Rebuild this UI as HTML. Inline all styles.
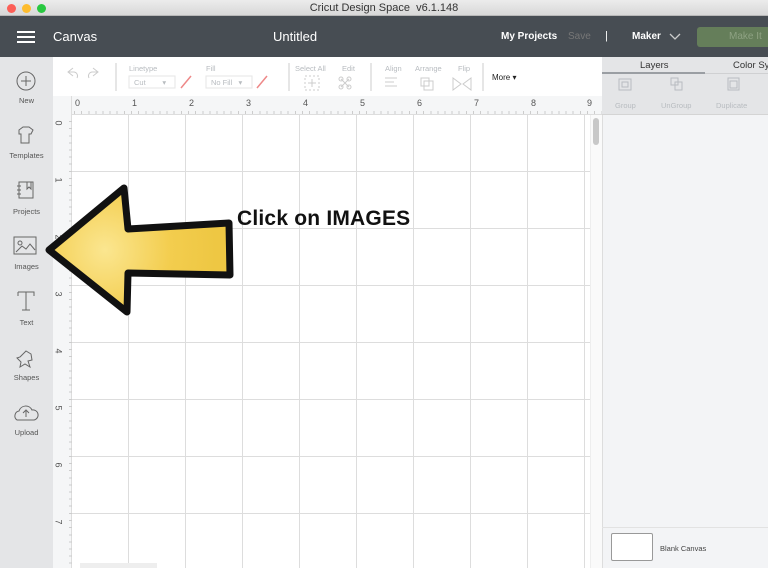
<!DOCTYPE html>
<html><head><meta charset="utf-8"><style>
*{margin:0;padding:0;box-sizing:border-box}
body{width:768px;height:568px;overflow:hidden;font-family:"Liberation Sans",sans-serif;background:#fff;position:relative}
.a{position:absolute;white-space:nowrap}
.t{font-size:7.5px;color:#b8bcc0}
.sl{font-size:7.5px;color:#555;width:53px;text-align:center;left:0}
</style></head><body>
<div class="a" style="left:0;top:0;width:768px;height:16px;background:linear-gradient(#ececec,#d8d8d8);border-bottom:1px solid #b8b8b8"></div>
<div class="a" style="left:7px;top:4px;width:9px;height:9px;border-radius:50%;background:#fc5f57"></div>
<div class="a" style="left:22px;top:4px;width:9px;height:9px;border-radius:50%;background:#fdbc2e"></div>
<div class="a" style="left:37px;top:4px;width:9px;height:9px;border-radius:50%;background:#28c840"></div>
<div class="a" style="left:0;top:2px;width:768px;text-align:center;font-size:11px;color:#333">Cricut Design Space&nbsp; v6.1.148</div>
<div class="a" style="left:0;top:16px;width:768px;height:41px;background:#474d53"></div>
<div class="a" style="left:17px;top:31px;width:18px;height:2px;background:#fff;box-shadow:0 5px 0 #fff,0 10px 0 #fff"></div>
<div class="a" style="left:53px;top:29px;font-size:13px;color:#fff">Canvas</div>
<div class="a" style="left:273px;top:29px;font-size:13px;color:#fff">Untitled</div>
<div class="a" style="left:501px;top:31px;font-size:10px;color:#fff;font-weight:bold">My Projects</div>
<div class="a" style="left:568px;top:31px;font-size:10px;color:#777">Save</div>
<div class="a" style="left:605px;top:30px;font-size:11px;color:#fff">|</div>
<div class="a" style="left:632px;top:31px;font-size:10px;color:#fff;font-weight:bold">Maker</div>
<svg class="a" style="left:669px;top:33px" width="12" height="8"><path d="M1 1l5 5 5-5" stroke="#ccc" fill="none" stroke-width="1.3"/></svg>
<div class="a" style="left:697px;top:27px;width:80px;height:20px;background:#657e5a;border-radius:3px;color:#8ea283;font-size:10px;padding:4px 0 0 32px">Make It</div>
<div class="a" style="left:0;top:57px;width:53px;height:511px;background:#e4e5e7"></div>
<svg class="a" style="left:0;top:57px" width="53" height="380" fill="none" stroke="#666" stroke-width="1">
<circle cx="26" cy="24" r="9"/><path d="M26 19v10M21 24h10"/>
<path d="M19 73l4-3h6l4 3-2 4h-2v9h-8v-9h-2z"/>
<rect x="19" y="125" width="14" height="16"/><path d="M17 129h4M17 133h4M17 137h4M27 125v7l2-2 2 2v-7"/>
<rect x="14" y="180" width="22" height="17"/><circle cx="20" cy="186" r="2"/><path d="M16 195l6-6 4 3 4-5 5 6"/>
<path d="M18 235h16v4M18 235v4M26 235v18M22 253h8"/>
<path d="M20 300l6-6 5 3 1 6-4 1 2 6-5-3-5 3 1-5-4-4z"/>
<path d="M17 363a5 5 0 0 1 2-9 7 7 0 0 1 13-1 5 5 0 0 1 2 10z"/><path d="M26 360v-6M23 356l3-3 3 3"/>
</svg>
<div class="a sl" style="top:96px">New</div>
<div class="a sl" style="top:151px">Templates</div>
<div class="a sl" style="top:207px">Projects</div>
<div class="a sl" style="top:262px">Images</div>
<div class="a sl" style="top:318px">Text</div>
<div class="a sl" style="top:373px">Shapes</div>
<div class="a sl" style="top:428px">Upload</div>
<div class="a" style="left:53px;top:57px;width:549px;height:39px;background:#fff"></div>
<svg class="a" style="left:53px;top:57px" width="549" height="39" fill="none" stroke="#ccc" stroke-width="1">
<path d="M20 19l-5-4 5-4M15 15h6a4 4 0 0 1 3 6"/><path d="M40 19l5-4-5-4M45 15h-6a4 4 0 0 0-3 6"/>
<path d="M63 6v28M236 6v28M318 6v28M430 6v28"/>
<rect x="76" y="19" width="46" height="12" stroke="#e5e5e5"/><rect x="153" y="19" width="46" height="12" stroke="#e5e5e5"/>
<path d="M128 31l10-12M204 31l10-12" stroke="#e88" stroke-width="1.5"/>
<rect x="252" y="19" width="14" height="14" stroke-dasharray="2 2"/><path d="M259 22v8M255 26h8"/>
<path d="M288 22l8 8M296 22l-8 8"/><circle cx="288" cy="22" r="2"/><circle cx="296" cy="22" r="2"/><circle cx="288" cy="30" r="2"/><circle cx="296" cy="30" r="2"/>
<path d="M332 21h12M332 25h9M332 29h12"/><rect x="368" y="21" width="8" height="8"/><rect x="371" y="24" width="9" height="9"/>
<path d="M400 21v12l8-6zM418 21v12l-8-6z"/>
</svg>
<div class="a t" style="left:129px;top:64px">Linetype</div>
<div class="a t" style="left:206px;top:64px">Fill</div>
<div class="a t" style="left:134px;top:78px">Cut &nbsp; &nbsp; &nbsp; &nbsp;▾</div>
<div class="a t" style="left:211px;top:78px">No Fill &nbsp; ▾</div>
<div class="a t" style="left:295px;top:64px">Select All</div>
<div class="a t" style="left:342px;top:64px">Edit</div>
<div class="a t" style="left:385px;top:64px">Align</div>
<div class="a t" style="left:415px;top:64px">Arrange</div>
<div class="a t" style="left:458px;top:64px">Flip</div>
<div class="a" style="left:492px;top:73px;font-size:8px;color:#222">More ▾</div>
<div class="a" style="left:53px;top:96px;width:549px;height:19px;background:#f5f6f7;border-bottom:1px solid #ddd;background-image:repeating-linear-gradient(90deg,transparent 0,transparent 6.1px,#ccc 6.1px,#ccc 7.1px);background-size:57px 3px;background-repeat:repeat-x;background-position:72px 15px"></div>
<div class="a" style="left:53px;top:96px;width:19px;height:472px;background:#f5f6f7;border-right:1px solid #ddd"></div>
<div class="a" style="left:53px;top:115px;width:19px;height:453px;background-image:repeating-linear-gradient(180deg,transparent 0,transparent 6.1px,#ccc 6.1px,#ccc 7.1px);background-size:3px 57px;background-repeat:repeat-y;background-position:16px 0"></div>
<div class="a" style="left:53px;top:98px;width:549px;height:10px;font-size:9px;color:#555">
<span class="a" style="left:22px">0</span><span class="a" style="left:79px">1</span><span class="a" style="left:136px">2</span><span class="a" style="left:193px">3</span><span class="a" style="left:250px">4</span><span class="a" style="left:307px">5</span><span class="a" style="left:364px">6</span><span class="a" style="left:421px">7</span><span class="a" style="left:478px">8</span><span class="a" style="left:534px">9</span></div>
<div class="a" style="left:56px;top:0;font-size:9px;color:#555">
<span class="a" style="top:118px;transform:rotate(90deg)">0</span><span class="a" style="top:175px;transform:rotate(90deg)">1</span><span class="a" style="top:232px;transform:rotate(90deg)">2</span><span class="a" style="top:289px;transform:rotate(90deg)">3</span><span class="a" style="top:346px;transform:rotate(90deg)">4</span><span class="a" style="top:403px;transform:rotate(90deg)">5</span><span class="a" style="top:460px;transform:rotate(90deg)">6</span><span class="a" style="top:517px;transform:rotate(90deg)">7</span></div>
<div class="a" style="left:72px;top:115px;width:518px;height:453px;background-image:linear-gradient(90deg,#ddd 1px,transparent 1px),linear-gradient(#ddd 1px,transparent 1px);background-size:57px 57px;background-position:56px 56px"></div>
<div class="a" style="left:590px;top:115px;width:12px;height:453px;background:#fafafa;border-left:1px solid #eee"></div>
<div class="a" style="left:593px;top:118px;width:6px;height:27px;background:#c8c8c8;border-radius:3px"></div>
<div class="a" style="left:80px;top:563px;width:77px;height:5px;background:#eee"></div>
<div class="a" style="left:602px;top:57px;width:166px;height:511px;background:#f3f4f6;border-left:1px solid #ddd"></div>
<div class="a" style="left:602px;top:57px;width:166px;height:58px;background:#e4e5e7;border-bottom:1px solid #d4d4d4"></div>
<div class="a" style="left:602px;top:72px;width:103px;height:2px;background:#9a9ea3"></div>
<div class="a" style="left:705px;top:73px;width:63px;height:1px;background:#cfd0d2"></div>
<div class="a" style="left:640px;top:60px;font-size:9.5px;color:#333">Layers</div>
<div class="a" style="left:733px;top:60px;font-size:9.5px;color:#333">Color Sy</div>
<svg class="a" style="left:602px;top:74px" width="166" height="20" fill="none" stroke="#b8bcc0">
<rect x="17" y="5" width="12" height="11"/><rect x="20" y="8" width="6" height="5"/><path d="M69 4h7v7h-7zM73 8h7v8h-7z"/><rect x="126" y="4" width="11" height="12"/><path d="M128 7h7v7h-7z"/></svg>
<div class="a t" style="left:615px;top:101px">Group</div>
<div class="a t" style="left:661px;top:101px">UnGroup</div>
<div class="a t" style="left:716px;top:101px">Duplicate</div>
<div class="a" style="left:602px;top:527px;width:166px;height:41px;border-top:1px solid #e2e2e2"></div>
<div class="a" style="left:611px;top:533px;width:42px;height:28px;background:#fff;border:1px solid #999;border-radius:2px"></div>
<div class="a" style="left:660px;top:544px;font-size:7.5px;color:#444">Blank Canvas</div>
<svg class="a" style="left:0;top:0" width="260" height="330">
<defs><radialGradient id="g" cx="105" cy="250" r="110" gradientUnits="userSpaceOnUse"><stop offset="0" stop-color="#fbe690"/><stop offset=".6" stop-color="#f3cd4e"/><stop offset="1" stop-color="#eec743"/></radialGradient></defs>
<path d="M49 250L124 188L128 229L229 223L230 275L128 273L127 312Z" fill="url(#g)" stroke="#111" stroke-width="7" stroke-linejoin="round"/>
</svg>
<div class="a" style="left:237px;top:207px;font-size:21px;font-weight:bold;color:#111;letter-spacing:0.2px">Click on IMAGES</div>
</body></html>
